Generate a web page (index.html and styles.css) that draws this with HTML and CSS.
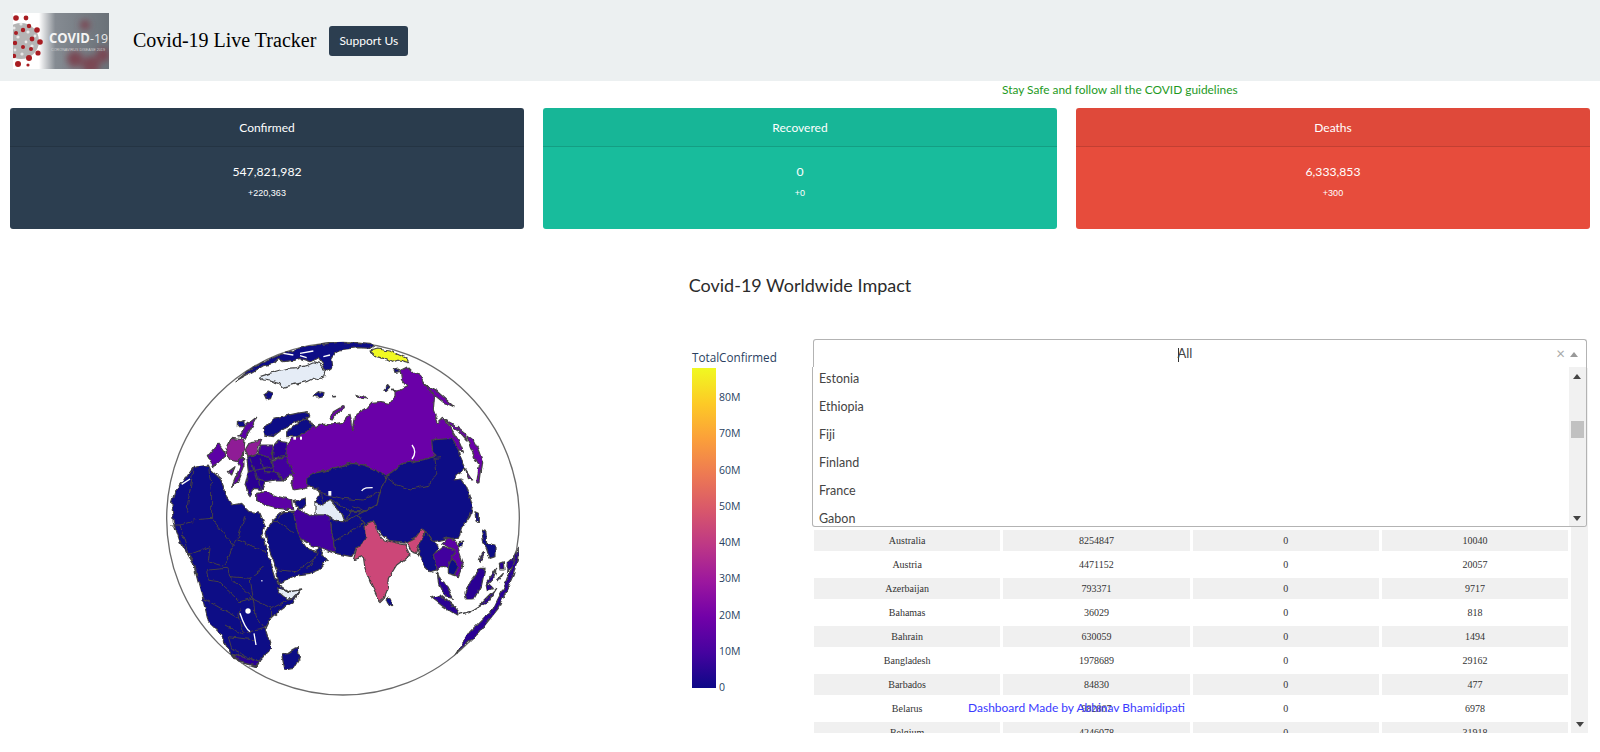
FILE: index.html
```html
<!DOCTYPE html>
<html lang="en">

<head>
    <meta charset="UTF-8">
    <title>Covid-19 Live Tracker</title>
    <link rel="stylesheet" href="styles.css">
</head>

<body>

    <!-- Top bar -->
    <header class="top-bar">
        <svg class="logo" viewBox="0 0 96 56">
            <defs>
                <linearGradient id="logo-fade" x1="0" x2="1" y1="0" y2="0">
                    <stop offset="0.27" stop-color="#fff" />
                    <stop offset="0.44" stop-color="#858b92" />
                    <stop offset="1" stop-color="#6a7178" />
                </linearGradient>
                <filter id="logo-blur"><feGaussianBlur stdDeviation="3" /></filter>
                <filter id="logo-soft"><feGaussianBlur stdDeviation="0.5" /></filter>
            </defs>
            <rect width="96" height="56" fill="url(#logo-fade)" />
            <g filter="url(#logo-blur)" fill="#7a4652">
                <circle cx="62" cy="46" r="8" />
                <circle cx="78" cy="52" r="9" />
                <circle cx="90" cy="42" r="7" />
                <circle cx="72" cy="12" r="5" />
            </g>
            <g filter="url(#logo-soft)">
                <circle cx="8" cy="28" r="18" fill="#b5b5b5" />
                <g fill="#e9e9e9">
                    <circle cx="8" cy="11" r="1.6" /><circle cx="15" cy="19" r="1.6" /><circle cx="5" cy="24" r="1.6" />
                    <circle cx="19" cy="33" r="1.6" /><circle cx="9" cy="41" r="1.6" /><circle cx="1" cy="15" r="1.6" />
                    <circle cx="13" cy="29" r="1.4" /><circle cx="22" cy="23" r="1.4" /><circle cx="2" cy="37" r="1.4" />
                </g>
                <g fill="#a81c20">
                    <circle cx="3" cy="5" r="2.8" /><circle cx="13" cy="5" r="2.4" /><circle cx="16" cy="13" r="2.2" />
                    <circle cx="24" cy="17" r="2.8" /><circle cx="27" cy="29" r="2.8" /><circle cx="25" cy="40" r="2.6" />
                    <circle cx="16" cy="45" r="3" /><circle cx="5" cy="51" r="3" /><circle cx="1" cy="43" r="2.2" />
                    <circle cx="3" cy="20" r="2" /><circle cx="10" cy="17" r="2.2" /><circle cx="19" cy="26" r="2.4" />
                    <circle cx="10" cy="34" r="2" /><circle cx="18" cy="36" r="2" /><circle cx="2" cy="30" r="2.2" />
                    <circle cx="15" cy="52" r="1.6" />
                </g>
            </g>
            <text x="36" y="30" class="logo-big" textLength="41" lengthAdjust="spacingAndGlyphs">COVID</text>
            <text x="77" y="30" class="logo-thin" textLength="18" lengthAdjust="spacingAndGlyphs">-19</text>
            <text x="38" y="38" class="logo-small" textLength="54" lengthAdjust="spacingAndGlyphs">CORONAVIRUS DISEASE 2019</text>
        </svg>
        <h1 class="site-title">Covid-19 Live Tracker</h1>
        <button class="btn-support">Support Us</button>
    </header>

    <p class="notice">Stay Safe and follow all the COVID guidelines</p>

    <!-- Summary cards -->
    <section class="cards">
        <div class="card card-dark">
            <div class="card-head">Confirmed</div>
            <div class="card-body">
                <p class="card-total">547,821,982</p>
                <p class="card-delta">+220,363</p>
            </div>
        </div>
        <div class="card card-green">
            <div class="card-head">Recovered</div>
            <div class="card-body">
                <p class="card-total">0</p>
                <p class="card-delta">+0</p>
            </div>
        </div>
        <div class="card card-red">
            <div class="card-head">Deaths</div>
            <div class="card-body">
                <p class="card-total">6,333,853</p>
                <p class="card-delta">+300</p>
            </div>
        </div>
    </section>

    <h2 class="page-title">Covid-19 Worldwide Impact</h2>

    <section class="dash">

        <!-- Globe, drawn in 3x units -->
        <div class="map-col">
            <svg class="globe" viewBox="0 0 1125 1125">
                <defs>
                    <filter id="rough" x="0" y="0" width="100%" height="100%">
                        <feTurbulence type="fractalNoise" baseFrequency="0.05" numOctaves="2" seed="4" />
                        <feDisplacementMap in="SourceGraphic" scale="14" xChannelSelector="R" yChannelSelector="G" />
                    </filter>
                </defs>
                <circle cx="579" cy="581" r="529" class="sphere" />
                <g class="rough">
                    <g class="land">
                        <!-- Arctic -->
                        <polygon class="c0" points="258,168 300,135 340,110 390,90 440,72 500,60 560,53 620,52 660,55 672,62 660,70 620,68 590,72 570,75 555,85 545,100 548,125 530,138 518,118 505,100 480,110 450,100 430,106 400,110 385,100 370,115 340,122 310,140 280,155" />
                        <polygon class="c-ice" points="330,155 350,148 380,138 410,130 440,128 470,122 490,113 510,118 525,135 522,155 505,165 490,160 470,170 445,175 420,182 395,187 385,175 360,168 340,165" />
                        <polygon class="c-max" points="660,78 680,72 720,78 770,100 777,113 745,105 725,112 700,100 680,95" />
                        <polygon class="c0" points="342,208 355,198 370,205 365,220 350,224" />
                        <polygon class="c0" points="488,212 505,200 522,203 520,212 500,216" />
                        <polygon class="c0" points="548,212 557,211 556,216 549,216" />
                        <polygon class="c-ru" points="540,283 550,260 585,240 586,248 560,265 550,285" />
                        <polygon class="c-ru" points="618,208 640,213 650,222 635,220" />
                        <polygon class="c0" points="700,195 715,180 719,187 708,197" />
                        <polygon class="c0" points="725,195 745,200 742,207" />
                        <polygon class="c0" points="730,135 745,132 748,140 735,142" />

                        <!-- Russia and the east -->
                        <polygon class="c-ru" points="408,365 425,340 445,335 465,322 462,300 480,285 495,310 510,298 530,298 560,295 580,292 600,265 606,290 608,318 618,268 650,250 665,232 690,230 720,235 735,215 735,200 750,195 770,185 755,165 750,135 770,125 790,145 810,150 825,180 855,195 850,255 865,295 880,280 900,305 925,345 940,380 925,378 905,340 870,345 850,340 848,380 855,395 815,405 790,410 760,415 725,445 710,452 665,430 640,420 605,415 560,430 490,445 470,460 470,475 490,475 460,490 430,495 425,480 430,460 410,430 405,400" />
                        <polygon class="c-ru" points="822,178 860,198 885,220 912,245 880,232 850,208" />
                        <polygon class="c-ru" points="885,282 905,292 925,310 945,326 950,345 930,322 905,305" />
                        <polygon class="c-ru" points="950,330 970,345 985,375 998,410 990,470 980,472 988,420 975,400 960,365" />
                        <polygon class="c3" points="945,430 968,465 955,460" />
                        <polygon class="c0" points="845,345 905,340 925,375 930,400 945,430 925,445 910,465 935,462 950,485 968,545 960,575 935,610 925,640 890,640 850,650 830,620 815,612 795,640 770,655 720,650 695,630 672,590 645,600 620,570 640,560 680,540 690,500 705,455 725,445 760,415 790,410 815,405 855,395 848,380" />
                        <polygon class="c0" points="470,460 490,445 560,430 605,415 640,420 665,430 710,452 690,500 680,540 640,560 620,570 585,590 575,565 540,525 515,540 495,530 510,505 500,490 470,480" />
                        <polygon class="c-ice" points="495,530 515,540 540,525 575,565 585,590 560,590 530,570 495,570" />
                        <polygon class="c0" points="540,575 560,590 585,590 620,570 645,600 650,640 620,670 605,695 555,685 550,650 545,620" />
                        <polygon class="c2" points="430,560 440,550 480,575 495,570 530,570 540,575 545,620 550,650 555,685 525,675 490,665 450,640 440,610" />
                        <polygon class="c3" points="320,505 350,500 385,515 425,525 428,555 385,550 345,540 320,525" />
                        <polygon class="c0" points="430,530 465,520 470,545 445,550" />
                        <polygon class="c0" points="345,625 365,590 400,560 430,560 440,610 450,640 470,670 500,680 505,665 532,705 505,735 480,745 440,750 385,775 380,735 360,680" />

                        <!-- Africa -->
                        <polygon class="c0" points="65,530 75,500 100,470 130,428 175,420 182,435 215,465 225,510 245,540 275,535 300,560 330,565 345,600 335,625 350,680 370,735 382,775 420,800 452,795 430,830 400,850 360,880 345,910 365,970 330,1005 320,1025 300,1020 265,1010 240,980 210,925 175,890 160,830 140,755 130,715 90,650 70,590" />
                        <polygon class="c-ice" points="380,785 420,800 452,795 430,820 410,822 390,805" />
                        <polygon class="c1" points="250,985 290,1000 328,1012 318,1023 265,1010" />
                        <polygon class="c0" points="395,990 415,985 430,975 445,970 448,1000 430,1030 405,1035" />

                        <!-- Europe -->
                        <polygon class="c3" points="172,395 205,355 220,375 225,395 190,425" />
                        <polygon class="c4" points="225,380 245,340 285,345 280,390 262,410 240,405" />
                        <polygon class="c4" points="285,375 300,350 335,345 320,385 295,395" />
                        <polygon class="c3" points="265,335 290,300 320,277 300,315 285,340" />
                        <polygon class="c0" points="262,293 285,287 285,305 262,305" />
                        <polygon class="c3" points="262,410 280,395 282,420 262,470 245,487 270,425" />
                        <polygon class="c3" points="235,440 255,425 245,450" />
                        <polygon class="c0" points="340,310 370,280 440,265 475,260 480,275 440,290 400,310 370,335 345,330" />
                        <polygon class="c0" points="410,320 445,295 470,277 490,305 465,325 440,335 410,335" />
                        <polygon class="c1" points="290,395 330,385 365,405 375,440 400,465 375,465 345,470 335,495 315,490 300,515 285,480 295,440" />
                        <polygon class="c2" points="328,385 332,360 365,360 368,395 365,405" />
                        <polygon class="c1" points="368,365 385,345 408,350 408,395 368,400" />
                        <polygon class="c2" points="365,405 408,395 430,445 400,465 375,440" />

                        <!-- South and south-east Asia -->
                        <polygon class="c-in" points="645,600 672,590 685,625 700,645 765,660 775,680 780,690 740,720 715,760 712,790 700,820 690,830 665,780 645,730 640,695 610,705 620,670 650,640" />
                        <polygon class="c-in" points="765,655 795,640 815,612 830,620 810,650 800,685 785,680 775,660" />
                        <polygon class="c0" points="710,815 725,825 728,838 715,842 708,830" />
                        <polygon class="c0" points="810,650 830,620 850,650 870,665 850,690 860,735 840,740 825,725 805,690" />
                        <polygon class="c2" points="850,690 880,665 915,680 905,700 895,725 870,725 860,735" />
                        <polygon class="c3" points="875,655 895,638 915,645 920,655 940,715 925,755 912,750 925,725 905,700 915,680" />
                        <polygon class="c0" points="895,725 905,700 925,725 912,750 895,745" />
                        <polygon class="c1" points="862,740 875,770 885,775 910,820 885,815 865,775" />
                        <polygon class="c1" points="845,818 870,810 925,855 920,870 880,845" />
                        <polygon class="c1" points="925,868 965,858 985,845 1040,790 1015,830 960,860" />
                        <polygon class="c1" points="945,805 960,770 990,730 1005,730 995,780 970,825 950,825" />
                        <polygon class="c1" points="915,990 960,920 1030,850 1065,780 1105,670 1105,690 1090,750 1045,850 985,925" />
                        <polygon class="c0" points="925,650 938,648 935,665 925,665" />
                        <polygon class="c0" points="975,560 985,565 985,590 978,585" />
                        <polygon class="c0" points="995,615 1008,620 1010,655 1035,660 1035,695 1020,700 1010,670 1000,650" />
                        <polygon class="c1" points="1000,680 1005,682 992,712 988,708" />
                        <polygon class="c1" points="1010,770 1030,745 1040,730 1030,760 1015,775 1030,790 1015,795" />
                        <polygon class="c1" points="1048,715 1060,710 1062,735 1050,735" />
                        <polygon class="c1" points="1072,715 1095,695 1085,725 1070,740" />
                        <polygon class="c1" points="1040,765 1060,745 1045,770" />
                    </g>

                    <!-- Borders that need no fill of their own -->
                    <path class="border" d="M130 585 L185 580 L250 660 L265 640 L285 570 M265 645 L345 680 M225 720 L250 660 M180 670 L175 710 L225 725 M115 690 L180 665 M90 600 L130 590 M60 600 L90 600 L115 690 L135 720 L140 750 M175 735 L230 730 L240 755 L300 760 L345 725 M300 760 L310 820 M240 755 L310 820 M170 735 L175 765 L205 770 L270 830 L305 820 L365 850 L415 825 M365 850 L365 880 M270 850 L265 880 L280 925 M160 820 L265 880 M225 900 L280 930 M235 935 L315 945 M235 935 L245 970 L320 1010 M280 925 L345 910 M310 820 L315 870 L345 910 M130 428 L110 560 M175 420 L185 500 L185 580" />
                    <path class="border" d="M710 458 L740 480 L780 492 L840 480 L860 440 L855 400 L870 398 M470 480 L520 505 L575 520 L640 525 L690 500 M515 505 L520 535 M545 525 L600 560 L640 560 M550 650 L600 620 L640 595 M400 560 L385 590 L430 625 M365 590 L385 590 M385 735 L440 740 L495 700 L505 680 M470 735 L495 700 M300 400 L320 465 L345 470 M330 400 L345 440 L375 440 M295 440 L370 425 M310 420 L335 500 M600 560 L585 590 M610 545 L650 560" />
                </g>

                <!-- Lakes and seas showing through -->
                <path class="water" d="M786 360 C798 375 795 390 786 402 M635 498 C640 488 650 488 668 488 M270 865 C280 895 290 915 300 920 M312 925 L318 960 M95 478 L120 462 M400 85 L430 90 M450 85 L490 78 M520 95 L540 90 M450 92 L470 98" />
                <circle class="lake" cx="294" cy="858" r="8" />
                <rect class="lake" x="430" y="335" width="8" height="9" />
                <rect class="lake" x="450" y="335" width="6" height="9" />
                <rect class="lake" x="535" y="498" width="9" height="14" />
                <rect class="lake" x="333" y="766" width="5" height="3" />
            </svg>
        </div>

        <!-- Colour scale -->
        <div class="scale-col">
            <div class="scale-title">TotalConfirmed</div>
            <div class="scale-row">
                <div class="scale-bar"></div>
                <div class="scale-ticks">
                    <span>80M</span>
                    <span>70M</span>
                    <span>60M</span>
                    <span>50M</span>
                    <span>40M</span>
                    <span>30M</span>
                    <span>20M</span>
                    <span>10M</span>
                    <span>0</span>
                </div>
            </div>
        </div>

        <!-- Country picker and table -->
        <div class="data-col">
            <div class="select-box">
                <div class="select-value"><span class="caret"></span>All</div>
                <span class="select-clear">×</span>
                <span class="arrow-up arrow-grey"></span>
            </div>

            <div class="select-menu">
                <div class="menu-list">
                    <div class="menu-item">Estonia</div>
                    <div class="menu-item">Ethiopia</div>
                    <div class="menu-item">Fiji</div>
                    <div class="menu-item">Finland</div>
                    <div class="menu-item">France</div>
                    <div class="menu-item">Gabon</div>
                </div>
                <div class="menu-scroll">
                    <span class="arrow-up"></span>
                    <span class="menu-thumb"></span>
                    <span class="arrow-down"></span>
                </div>
            </div>

            <div class="table-wrap">
                <table class="country-table">
                    <tr><td>Australia</td><td>8254847</td><td>0</td><td>10040</td></tr>
                    <tr><td>Austria</td><td>4471152</td><td>0</td><td>20057</td></tr>
                    <tr><td>Azerbaijan</td><td>793371</td><td>0</td><td>9717</td></tr>
                    <tr><td>Bahamas</td><td>36029</td><td>0</td><td>818</td></tr>
                    <tr><td>Bahrain</td><td>630059</td><td>0</td><td>1494</td></tr>
                    <tr><td>Bangladesh</td><td>1978689</td><td>0</td><td>29162</td></tr>
                    <tr><td>Barbados</td><td>84830</td><td>0</td><td>477</td></tr>
                    <tr><td>Belarus</td><td>982867</td><td>0</td><td>6978</td></tr>
                    <tr><td>Belgium</td><td>4246078</td><td>0</td><td>31918</td></tr>
                </table>
                <div class="table-scroll"><span class="arrow-down"></span></div>
            </div>
        </div>
    </section>

    <p class="made-by">Dashboard Made by Abhinav Bhamidipati</p>

</body>

</html>
```

FILE: styles.css
```css
/* Basic Reset */
* {
    margin: 0;
    padding: 0;
    box-sizing: border-box;
}

body {
    font-family: Lato, sans-serif;
    background-color: white;
    color: #2c3e50;
    width: 1600px;
    height: 752px;
    overflow: hidden;
    position: relative;
}

/* Top bar */
.top-bar {
    display: flex;
    align-items: center;
    height: 81px;
    padding-left: 13px;
    background-color: #ecf0f1;
}

.logo {
    width: 96px;
    height: 56px;
}

.logo-big {
    font-family: "Open Sans", sans-serif;
    font-size: 14px;
    font-weight: 700;
    fill: #f4f4f4;
}

.logo-thin {
    font-family: "Open Sans", sans-serif;
    font-size: 13px;
    fill: #e6e6e6;
}

.logo-small {
    font-family: "Liberation Sans", sans-serif;
    font-size: 3px;
    fill: #cfcfcf;
}

.site-title {
    margin-left: 24px;
    font-family: "Liberation Serif", serif;
    font-size: 20px;
    font-weight: normal;
    color: black;
}

.btn-support {
    margin-left: 13px;
    width: 79px;
    height: 30px;
    border: none;
    border-radius: 3px;
    background-color: #2c3e50;
    color: white;
    font-family: Lato, sans-serif;
    font-size: 12px;
}

.notice {
    height: 27px;
    padding-left: 1002px;
    line-height: 18px;
    font-size: 11.9px;
    color: #1e9a1e;
}

/* Summary cards */
.cards {
    display: flex;
    gap: 19px;
    padding: 0 10px;
}

.card {
    width: 514px;
    height: 121px;
    border-radius: 3px;
    color: white;
    text-align: center;
}

.card-dark {
    background-color: #2c3e50;
}

.card-green {
    background-color: #18bc9c;
}

.card-red {
    background-color: #e74c3c;
}

.card-head {
    height: 39px;
    line-height: 39px;
    font-size: 12px;
    background-color: rgba(0, 0, 0, 0.03);
    border-bottom: 1px solid rgba(0, 0, 0, 0.13);
}

.card-body {
    padding-top: 16px;
}

.card-total {
    font-size: 12.2px;
    line-height: 18px;
}

.card-delta {
    margin-top: 5px;
    font-family: "Liberation Sans", sans-serif;
    font-size: 9px;
    line-height: 14px;
}

.page-title {
    margin-top: 45px;
    font-size: 18px;
    font-weight: normal;
    line-height: 22px;
    text-align: center;
    color: #2b2b2b;
}

/* Dashboard row */
.dash {
    display: flex;
    align-items: flex-start;
    margin-top: 1px;
}

.map-col {
    width: 692px;
    padding: 28px 0 0 150px;
}

.globe {
    display: block;
    width: 375px;
    height: 375px;
}

.sphere {
    fill: white;
    stroke: #6b6b6b;
    stroke-width: 4;
}

.rough {
    filter: url(#rough);
}

.land polygon {
    stroke: #444;
    stroke-width: 3.5;
    stroke-linejoin: round;
}

.c0 { fill: #100786; }
.c1 { fill: #2a0593; }
.c2 { fill: #42049e; }
.c3 { fill: #5c02a5; }
.c4 { fill: #8f1a96; }
.c-ru { fill: #6a00a8; }
.c-in { fill: #cc4778; }
.c-max { fill: #f0f921; }
.c-ice { fill: #e5ecf6; }

.border {
    fill: none;
    stroke: #444;
    stroke-width: 3;
    stroke-linejoin: round;
}

.water {
    fill: none;
    stroke: white;
    stroke-width: 4;
}

.lake {
    fill: white;
}

/* Colour scale */
.scale-col {
    width: 121px;
    padding-top: 53px;
    font-family: "Open Sans", sans-serif;
    color: #2a3f5f;
}

.scale-title {
    font-size: 11.7px;
    line-height: 14px;
    margin-bottom: 4px;
}

.scale-row {
    display: flex;
}

.scale-bar {
    width: 24px;
    height: 320px;
    background: linear-gradient(to bottom, #f0f921, #fdca26, #fb9f3a, #ed7953, #d8576b, #bd3786, #9c179e, #7201a8, #46039f, #0d0887);
}

.scale-ticks {
    display: flex;
    flex-direction: column;
    padding: 11px 0 0 3px;
    font-size: 10.5px;
}

.scale-ticks span {
    height: 36.25px;
    line-height: 36.25px;
}

/* Country picker */
.data-col {
    position: relative;
    width: 775px;
    margin-top: 42px;
}

.select-box {
    position: relative;
    height: 29px;
    width: 774px;
    border: 1px solid #b3b3b3;
    border-bottom-color: #e6e6e6;
    border-radius: 3px 3px 0 0;
}

.select-value {
    padding-right: 30px;
    line-height: 27px;
    font-size: 13px;
    text-align: center;
    color: #444;
}

.caret {
    display: inline-block;
    width: 1px;
    height: 14px;
    margin-right: -1px;
    vertical-align: middle;
    background-color: #333;
}

.select-clear {
    position: absolute;
    top: 3px;
    right: 21px;
    font-size: 15px;
    line-height: 20px;
    color: #a8a8a8;
}

.arrow-up,
.arrow-down {
    display: block;
    width: 0;
    height: 0;
    border-left: 4px solid transparent;
    border-right: 4px solid transparent;
}

.arrow-up {
    border-bottom: 5px solid #444;
}

.arrow-down {
    border-top: 5px solid #444;
}

.arrow-grey {
    position: absolute;
    top: 12px;
    right: 8px;
    border-bottom-color: #999;
}

.select-menu {
    position: absolute;
    z-index: 2;
    top: 28px;
    left: -1px;
    display: flex;
    width: 775px;
    height: 160px;
    overflow: hidden;
    background-color: white;
    border: 1px solid #b3b3b3;
    border-top: none;
    border-radius: 0 0 3px 3px;
}

.menu-list {
    flex: 1;
    margin-top: -2px;
}

.menu-item {
    height: 28px;
    line-height: 28px;
    padding-left: 6px;
    font-size: 12.5px;
    color: #444;
}

.menu-scroll {
    position: relative;
    width: 17px;
    background-color: #f1f1f1;
}

.menu-scroll .arrow-up {
    position: absolute;
    top: 7px;
    left: 4px;
}

.menu-scroll .arrow-down {
    position: absolute;
    bottom: 5px;
    left: 4px;
}

.menu-thumb {
    position: absolute;
    top: 54px;
    left: 2px;
    width: 13px;
    height: 17px;
    background-color: #c1c1c1;
}

/* Table under the picker */
.table-wrap {
    display: flex;
    align-items: flex-start;
    height: 365px;
    padding-top: 159px;
    overflow: hidden;
}

.country-table {
    flex: none;
    width: 760px;
    margin-left: -2px;
    table-layout: fixed;
    border-collapse: separate;
    border-spacing: 3px;
    font-family: "Liberation Serif", serif;
    font-size: 10px;
    color: #333;
}

.country-table td {
    height: 21px;
    text-align: center;
}

.country-table tr:nth-child(odd) td {
    background-color: #f0f0f0;
}

.table-scroll {
    position: absolute;
    top: 29px;
    right: 0;
    display: flex;
    align-items: flex-end;
    justify-content: center;
    width: 17px;
    height: 365px;
    padding-bottom: 6px;
    background-color: #f1f1f1;
}

.made-by {
    position: absolute;
    top: 700px;
    left: 968px;
    font-size: 12px;
    line-height: 16px;
    color: #3a3aff;
}
```
